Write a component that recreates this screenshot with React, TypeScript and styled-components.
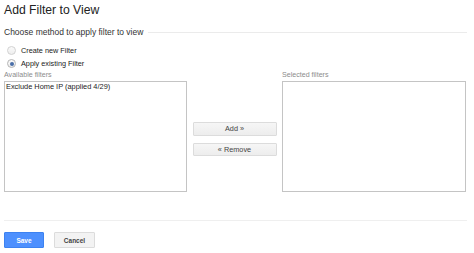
import styled, { createGlobalStyle } from 'styled-components';

const GlobalStyle = createGlobalStyle`
  body {
    margin: 0;
    background: #fff;
    font-family: "Liberation Sans", Arial, sans-serif;
    color: #222;
  }
`;

const App = () => {
  return (
    <Page>
      <GlobalStyle />
      <Title>Add Filter to View</Title>
      <SectionHead>
        <SectionText>Choose method to apply filter to view</SectionText>
        <SectionRule />
      </SectionHead>
      <Options>
        <Option>
          <Radio checked={false} />
          <OptionLabel>Create new Filter</OptionLabel>
        </Option>
        <Option>
          <Radio checked />
          <OptionLabel>Apply existing Filter</OptionLabel>
        </Option>
      </Options>
      <Picker>
        <Column>
          <ListLabel>Available filters</ListLabel>
          <ListBox>
            <ListItem>Exclude Home IP (applied 4/29)</ListItem>
          </ListBox>
        </Column>
        <Actions>
          <MoveButton>Add »</MoveButton>
          <MoveButton>« Remove</MoveButton>
        </Actions>
        <Column>
          <ListLabel>Selected filters</ListLabel>
          <ListBox />
        </Column>
      </Picker>
      <Divider />
      <Footer>
        <FooterButton primary>Save</FooterButton>
        <FooterButton>Cancel</FooterButton>
      </Footer>
    </Page>
  );
};

export default App;

interface IRadio {
  checked: boolean;
}

interface IFooterButton {
  primary?: boolean;
}

const Page = styled.div`
  width: 463px;
  padding: 0 7px 0 4px;
`;

const Title = styled.div`
  padding-top: 3px;
  font-size: 12.2px;
  line-height: 14px;
  color: #222;
`;

const SectionHead = styled.div`
  display: flex;
  align-items: center;
  height: 10px;
  margin-top: 10px;
`;

const SectionText = styled.div`
  font-size: 8.5px;
  line-height: 10px;
  color: #333;
  white-space: nowrap;
`;

const SectionRule = styled.div`
  flex-grow: 1;
  height: 1px;
  margin-left: 5px;
  background: #ebebeb;
`;

const Options = styled.div`
  display: flex;
  flex-direction: column;
  margin-top: 7px;
`;

const Option = styled.div`
  display: flex;
  align-items: center;
  height: 13px;
`;

const Radio = styled.span<IRadio>`
  position: relative;
  box-sizing: border-box;
  width: 9px;
  height: 9px;
  margin-left: 3px;
  border-radius: 50%;
  border: 1px solid ${(props) => (props.checked ? '#b5b5b5' : '#d2d2d2')};
  background: linear-gradient(#fafafa, #eeeeee);

  &::after {
    content: '';
    display: ${(props) => (props.checked ? 'block' : 'none')};
    position: absolute;
    left: 1.5px;
    top: 1.5px;
    width: 4px;
    height: 4px;
    border-radius: 50%;
    background: #4a6ea8;
  }
`;

const OptionLabel = styled.span`
  margin-left: 5px;
  font-size: 7.3px;
  color: #222;
`;

const Picker = styled.div`
  display: grid;
  grid-template-columns: 183px 95px 184px;
  margin-top: 1px;
`;

const Column = styled.div`
  display: flex;
  flex-direction: column;
`;

const ListLabel = styled.div`
  height: 9px;
  margin-bottom: 1px;
  font-size: 7.1px;
  line-height: 9px;
  color: #8c8c8c;
`;

const ListBox = styled.div`
  box-sizing: border-box;
  height: 111px;
  padding: 0 1px;
  border: 1px solid #c4c4c4;
  background: #fff;
`;

const ListItem = styled.div`
  font-size: 7.4px;
  line-height: 9px;
  color: #222;
  white-space: nowrap;
`;

const Actions = styled.div`
  display: flex;
  flex-direction: column;
  align-items: center;
  gap: 7px;
  padding-top: 51px;
`;

const MoveButton = styled.div`
  box-sizing: border-box;
  width: 84px;
  height: 13.5px;
  display: flex;
  align-items: center;
  justify-content: center;
  border: 1px solid #dcdcdc;
  border-radius: 1px;
  background: linear-gradient(#f6f6f6, #ededed);
  font-size: 7.3px;
  color: #444;
`;

const Divider = styled.div`
  height: 1px;
  margin-top: 28px;
  background: #efefef;
`;

const Footer = styled.div`
  display: flex;
  gap: 10px;
  margin-top: 11px;
`;

const FooterButton = styled.div<IFooterButton>`
  box-sizing: border-box;
  width: ${(props) => (props.primary ? 40 : 41)}px;
  height: 16px;
  display: flex;
  align-items: center;
  justify-content: center;
  border: 1px solid ${(props) => (props.primary ? '#3d82f0' : '#dcdcdc')};
  border-radius: 1px;
  background: ${(props) => (props.primary ? '#4d90fe' : '#f3f3f3')};
  font-size: 6.5px;
  font-weight: bold;
  color: ${(props) => (props.primary ? '#fff' : '#444')};
`;
